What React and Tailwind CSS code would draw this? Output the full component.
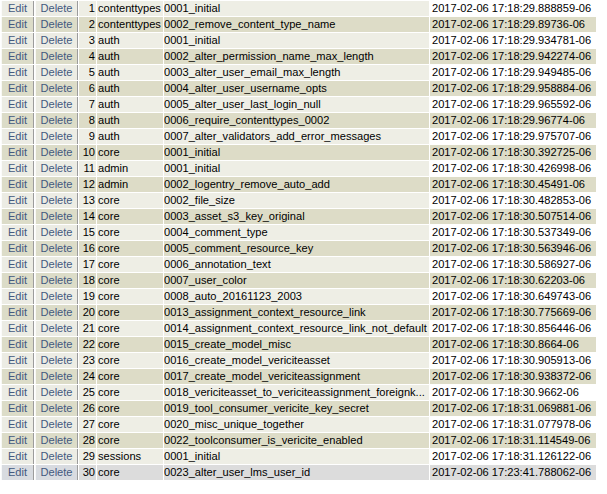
const rows = [
  ["contenttypes", "0001_initial", "17:18:29.888859-06"],
  ["contenttypes", "0002_remove_content_type_name", "17:18:29.89736-06"],
  ["auth", "0001_initial", "17:18:29.934781-06"],
  ["auth", "0002_alter_permission_name_max_length", "17:18:29.942274-06"],
  ["auth", "0003_alter_user_email_max_length", "17:18:29.949485-06"],
  ["auth", "0004_alter_user_username_opts", "17:18:29.958884-06"],
  ["auth", "0005_alter_user_last_login_null", "17:18:29.965592-06"],
  ["auth", "0006_require_contenttypes_0002", "17:18:29.96774-06"],
  ["auth", "0007_alter_validators_add_error_messages", "17:18:29.975707-06"],
  ["core", "0001_initial", "17:18:30.392725-06"],
  ["admin", "0001_initial", "17:18:30.426998-06"],
  ["admin", "0002_logentry_remove_auto_add", "17:18:30.45491-06"],
  ["core", "0002_file_size", "17:18:30.482853-06"],
  ["core", "0003_asset_s3_key_original", "17:18:30.507514-06"],
  ["core", "0004_comment_type", "17:18:30.537349-06"],
  ["core", "0005_comment_resource_key", "17:18:30.563946-06"],
  ["core", "0006_annotation_text", "17:18:30.586927-06"],
  ["core", "0007_user_color", "17:18:30.62203-06"],
  ["core", "0008_auto_20161123_2003", "17:18:30.649743-06"],
  ["core", "0013_assignment_context_resource_link", "17:18:30.775669-06"],
  ["core", "0014_assignment_context_resource_link_not_default", "17:18:30.856446-06"],
  ["core", "0015_create_model_misc", "17:18:30.8664-06"],
  ["core", "0016_create_model_vericiteasset", "17:18:30.905913-06"],
  ["core", "0017_create_model_vericiteassignment", "17:18:30.938372-06"],
  ["core", "0018_vericiteasset_to_vericiteassignment_foreignk...", "17:18:30.9662-06"],
  ["core", "0019_tool_consumer_vericite_key_secret", "17:18:31.069881-06"],
  ["core", "0020_misc_unique_together", "17:18:31.077978-06"],
  ["core", "0022_toolconsumer_is_vericite_enabled", "17:18:31.114549-06"],
  ["sessions", "0001_initial", "17:18:31.126122-06"],
  ["core", "0023_alter_user_lms_user_id", "17:23:41.788062-06"],
]

function Row({ n, app, name, applied }) {
  const last = n === 30
  const odd = n % 2 === 1

  const rowBg = last ? "bg-[#dcdcdc]" : odd ? "bg-[#eeeee5]" : "bg-[#dddcc7]"
  const dateBg = last ? "bg-[#dcdcdc]" : odd ? "bg-white" : "bg-[#dddcc7]"
  const btnBg = last
    ? "bg-[#d8dbe0]"
    : odd
      ? "bg-[#ececE4]"
      : "bg-[#dcdcc8]"

  const btn = `${btnBg} h-[15px] p-0 text-center text-[#43597f] border-r border-r-[#9c9c9c] border-l border-l-white/80`

  return (
    <tr className="h-[15px] leading-[15px]">
      <td className={btn}>Edit</td>
      <td className={btn}>Delete</td>
      <td className={`${rowBg} p-0 pr-[1px] text-right`}>{n}</td>
      <td className={`${rowBg} p-0 pl-[1px] overflow-hidden whitespace-nowrap`}>{app}</td>
      <td className={`${rowBg} p-0 overflow-hidden whitespace-nowrap`}>{name}</td>
      <td className={`${dateBg} p-0 pl-[2px] overflow-hidden whitespace-nowrap`}>
        2017-02-06 {applied}
      </td>
    </tr>
  )
}

export default function App() {
  return (
    <div className="w-[607px] h-[494px] bg-white overflow-hidden font-['Liberation_Sans',Arial,sans-serif] text-[11.1px] text-black">
      <table className="table-fixed border-separate border-spacing-x-[1px] border-spacing-y-[1px] w-[596px]">
        <colgroup>
          <col className="w-[33px]" />
          <col className="w-[43px]" />
          <col className="w-[17px]" />
          <col className="w-[66px]" />
          <col className="w-[265px]" />
          <col className="w-[166px]" />
        </colgroup>
        <tbody>
          {rows.map(([app, name, applied], i) => (
            <Row key={i} n={i + 1} app={app} name={name} applied={applied} />
          ))}
        </tbody>
      </table>
    </div>
  )
}
